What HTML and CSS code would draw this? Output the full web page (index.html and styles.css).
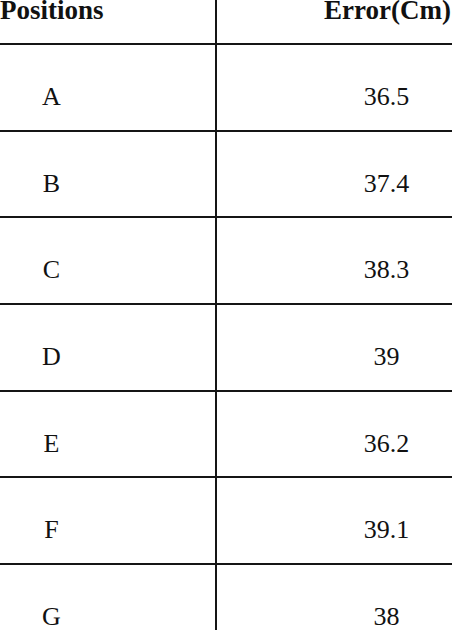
FILE: index.html
```html
<!DOCTYPE html>
<html>
<head>
<meta charset="utf-8">
<link rel="stylesheet" href="styles.css">
</head>
<body>
<div class="table">
  <div class="cell left head"><span class="box-l">Positions</span></div>
  <div class="cell right head"><span class="box-r">Error(Cm)</span></div>

  <div class="cell left row"><span class="box-l">A</span></div>
  <div class="cell right row"><span class="box-r">36.5</span></div>

  <div class="cell left row"><span class="box-l">B</span></div>
  <div class="cell right row"><span class="box-r">37.4</span></div>

  <div class="cell left row"><span class="box-l">C</span></div>
  <div class="cell right row"><span class="box-r">38.3</span></div>

  <div class="cell left row"><span class="box-l">D</span></div>
  <div class="cell right row"><span class="box-r">39</span></div>

  <div class="cell left row"><span class="box-l">E</span></div>
  <div class="cell right row"><span class="box-r">36.2</span></div>

  <div class="cell left row"><span class="box-l">F</span></div>
  <div class="cell right row"><span class="box-r">39.1</span></div>

  <div class="cell left row"><span class="box-l">G</span></div>
  <div class="cell right row"><span class="box-r">38</span></div>
</div>
</body>
</html>
```
FILE: styles.css
```css
html, body {
  margin: 0;
  padding: 0;
  background: #ffffff;
  height: 630px;
  overflow: hidden;
}
.table {
  display: grid;
  grid-template-columns: 217px 235px;
  font-family: "Liberation Serif", "Times New Roman", serif;
  color: #111111;
}
.cell {
  box-sizing: border-box;
}
.left {
  border-right: 2px solid #151515;
}
.right {
  padding-left: 107px;
}
.box-l {
  display: block;
  width: 103px;
  text-align: center;
}
.box-r {
  display: block;
  width: 125px;
  text-align: center;
}
.head {
  height: 43px;
  font-weight: bold;
  font-size: 27px;
  line-height: 20px;
}
.row {
  height: 86.67px;
  border-top: 2px solid #151515;
  font-size: 26px;
  line-height: 26px;
  padding-top: 39px;
}
```
